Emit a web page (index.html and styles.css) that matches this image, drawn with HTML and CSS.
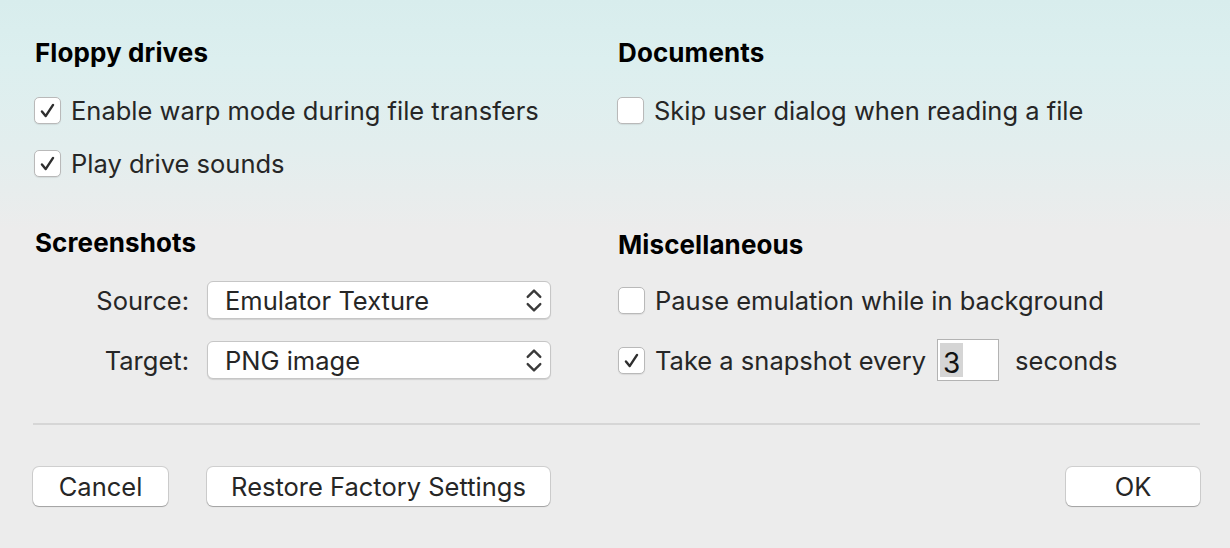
FILE: index.html
```html
<!DOCTYPE html>
<html>
<head>
<meta charset="utf-8">
<link rel="stylesheet" href="styles.css">
</head>
<body>
<div class="panel">
  <div class="grid">
    <section class="sec left">
      <h2 class="head">Floppy drives</h2>
      <label class="row"><span class="cb on"><svg viewBox="0 0 27 27"><path d="M7.5 14.5 L11.5 19.5 L19.5 7.5"/></svg></span><span class="txt">Enable warp mode during file transfers</span></label>
      <label class="row"><span class="cb on"><svg viewBox="0 0 27 27"><path d="M7.5 14.5 L11.5 19.5 L19.5 7.5"/></svg></span><span class="txt">Play drive sounds</span></label>
    </section>
    <section class="sec right">
      <h2 class="head">Documents</h2>
      <label class="row"><span class="cb"></span><span class="txt">Skip user dialog when reading a file</span></label>
    </section>
    <section class="sec left second">
      <h2 class="head">Screenshots</h2>
      <div class="row form">
        <span class="lbl">Source:</span>
        <div class="popup"><span>Emulator Texture</span><svg class="chev" viewBox="0 0 20 30"><path d="M3 11 L10 4 L17 11"/><path d="M3 19 L10 26 L17 19"/></svg></div>
      </div>
      <div class="row form">
        <span class="lbl">Target:</span>
        <div class="popup"><span>PNG image</span><svg class="chev" viewBox="0 0 20 30"><path d="M3 11 L10 4 L17 11"/><path d="M3 19 L10 26 L17 19"/></svg></div>
      </div>
    </section>
    <section class="sec right second misc">
      <h2 class="head">Miscellaneous</h2>
      <label class="row"><span class="cb"></span><span class="txt">Pause emulation while in background</span></label>
      <label class="row"><span class="cb on"><svg viewBox="0 0 27 27"><path d="M7.5 14.5 L11.5 19.5 L19.5 7.5"/></svg></span><span class="txt">Take a snapshot every</span><span class="field"><span class="sel">3</span></span><span class="txt unit">seconds</span></label>
    </section>
  </div>
  <hr class="sep">
  <div class="buttons">
    <button class="btn cancel">Cancel</button>
    <button class="btn restore">Restore Factory Settings</button>
    <span class="spacer"></span>
    <button class="btn ok">OK</button>
  </div>
</div>
</body>
</html>
```
FILE: styles.css
```css
html, body {
  margin: 0;
  padding: 0;
}
body {
  width: 1230px;
  height: 548px;
  overflow: hidden;
  background: linear-gradient(to bottom, #d8eded 0px, #dcefef 60px, #e3eeee 150px, #ececec 230px, #ececec 548px);
  font-family: Inter, "Liberation Sans", sans-serif;
  color: #262626;
}
.panel {
  padding: 38px 30px 0 33px;
}
.grid {
  display: grid;
  grid-template-columns: 582px 1fr;
}
.sec {
  display: flex;
  flex-direction: column;
}
.sec.second {
  margin-top: 45px;
}
.right {
  padding-left: 1px;
}
.head {
  margin: 0;
  height: 30px;
  line-height: 30px;
  font-size: 26px;
  font-weight: 700;
  color: #000;
  letter-spacing: 0.1px;
  padding-left: 2px;
}
.misc .head {
  margin-top: 2px;
}
.row {
  display: flex;
  align-items: center;
  height: 40px;
  margin-top: 13px;
  font-size: 25.5px;
}
.head + .row {
  margin-top: 22px;
}
.misc .head + .row {
  margin-top: 20px;
}
.second .row + .row {
  margin-top: 20px;
}
.cb {
  width: 25px;
  height: 25px;
  border: 1px solid #b9b9b9;
  border-radius: 5px;
  background: #fff;
  box-shadow: 0 1px 1px rgba(0,0,0,0.08);
  margin-left: 1px;
  margin-right: 10px;
  flex: none;
  display: flex;
}
.cb svg {
  width: 25px;
  height: 25px;
}
.cb svg path {
  fill: none;
  stroke: #2e2e2e;
  stroke-width: 2.6;
  stroke-linecap: round;
  stroke-linejoin: round;
}
.misc .cb { margin-left: 2px; }
.lbl {
  width: 156px;
  text-align: right;
  margin-right: 18px;
}
.popup {
  width: 344px;
  height: 38px;
  box-sizing: border-box;
  border: 1px solid #c6c6c6;
  border-radius: 6px;
  background: #fff;
  box-shadow: 0 1px 1px rgba(0,0,0,0.12);
  display: flex;
  align-items: center;
  justify-content: space-between;
  padding-left: 17px;
}
.chev {
  width: 18px;
  height: 27px;
  margin-right: 7px;
}
.chev path {
  fill: none;
  stroke: #3a3a3a;
  stroke-width: 2.6;
  stroke-linecap: round;
  stroke-linejoin: round;
}
.field {
  width: 62px;
  height: 42px;
  border: 1px solid #b3b3b3;
  background: #fff;
  margin-left: 11px;
  margin-right: 16px;
  box-sizing: border-box;
  display: flex;
  align-items: center;
  padding-left: 2px;
  flex: none;
}
.sel {
  background: #d5d5d5;
  color: #111;
  height: 34px;
  line-height: 40px;
  padding: 0 3px;
  font-size: 28px;
}
.sep {
  margin: 43px 0 0 0;
  border: none;
  height: 2px;
  background: #d6d6d6;
  width: 1167px;
}
.buttons {
  display: flex;
  margin-top: 42px;
}
.spacer { flex: 1; }
.btn {
  height: 39px;
  border: none;
  border-radius: 6px;
  background: #fff;
  box-shadow: 0 0 0 1px rgba(0,0,0,0.12), 0 1px 1px rgba(0,0,0,0.22);
  font-family: Inter, "Liberation Sans", sans-serif;
  font-size: 25.5px;
  color: #262626;
  padding: 0;
}
.cancel { width: 135px; }
.restore { width: 343px; margin-left: 39px; }
.ok { width: 134px; }
```
